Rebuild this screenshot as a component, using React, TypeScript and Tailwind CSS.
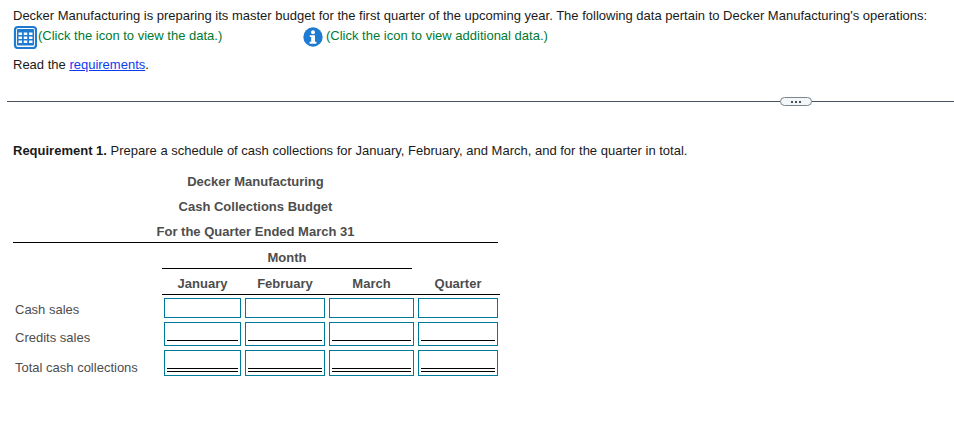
const font = { fontFamily: '"Liberation Sans", Arial, sans-serif' };

function CellBox({ lines, h, pb }: { lines: number; h: string; pb: string }) {
  return (
    <div className="px-[2px] flex items-start">
      <div className={`w-full ${h} ${pb} border border-[#007c98] bg-white px-[2px] flex flex-col justify-end`}>
        {lines >= 1 && <div className="h-px bg-black" />}
        {lines === 2 && <div className="h-px bg-black mt-[2px]" />}
      </div>
    </div>
  );
}

function Row({ label, lines, h, pb, cls, labelCls }: { label: string; lines: number; h: string; pb: string; cls: string; labelCls: string }) {
  return (
    <div className={`grid grid-cols-[149px_81px_84px_89px_84px] ${cls}`}>
      <div className={`pl-[2px] flex items-center text-[#4d4d4d] ${labelCls}`}>{label}</div>
      <CellBox lines={lines} h={h} pb={pb} />
      <CellBox lines={lines} h={h} pb={pb} />
      <CellBox lines={lines} h={h} pb={pb} />
      <CellBox lines={lines} h={h} pb={pb} />
    </div>
  );
}

export default function App() {
  return (
    <div className="w-[954px] h-[431px] bg-white text-[13px] leading-[15px] text-[#1a1a1a] overflow-hidden" style={font}>
      <div className="pl-[13px] pt-[8px]">
        <p>Decker Manufacturing is preparing its master budget for the first quarter of the upcoming year. The following data pertain to Decker Manufacturing's operations:</p>
        <div className="flex items-center h-[24px] mt-px">
          <svg width="24" height="24" viewBox="0 0 24 24" className="shrink-0 mt-[2px]">
            <rect x="2" y="2" width="21" height="21" rx="3" fill="#fff" stroke="#1f7ad1" strokeWidth="2.2" />
            <rect x="4" y="4" width="17" height="16.5" rx="1" fill="#1f7ad1" />
            <g fill="#fff">
              <rect x="5.5" y="7.5" width="3.5" height="2.5" /><rect x="10.75" y="7.5" width="3.5" height="2.5" /><rect x="16" y="7.5" width="3.5" height="2.5" />
              <rect x="5.5" y="11.5" width="3.5" height="2.5" /><rect x="10.75" y="11.5" width="3.5" height="2.5" /><rect x="16" y="11.5" width="3.5" height="2.5" />
              <rect x="5.5" y="15.5" width="3.5" height="2.5" /><rect x="10.75" y="15.5" width="3.5" height="2.5" /><rect x="16" y="15.5" width="3.5" height="2.5" />
            </g>
          </svg>
          <span className="text-[#007a33] w-[265px] shrink-0 ml-px -mt-px">(Click the icon to view the data.)</span>
          <svg width="20" height="20" viewBox="0 0 20 20" className="shrink-0 mr-[3px] mt-[2px]">
            <circle cx="10" cy="10" r="9.7" fill="#1f7ad1" />
            <circle cx="10" cy="5.2" r="2" fill="#fff" />
            <path d="M6.8 8.2h5.2v6.6h1.4v1.9H6.6v-1.9h1.6v-4.7H6.8z" fill="#fff" />
          </svg>
          <span className="text-[#007a33] -mt-px">(Click the icon to view additional data.)</span>
        </div>
        <p className="mt-[9px]">
          Read the <a className="text-[#0d3cf0] underline">requirements</a>.
        </p>
      </div>

      <div className="relative mt-[29px] ml-[7px] h-px bg-[#47525c]">
        <div className="absolute left-[773px] -top-[4px] w-[32px] h-[9px] rounded-full border border-[#7a8791] bg-[#f3f5f7] flex items-center justify-center gap-[2px]">
          <span className="w-[2px] h-[2px] bg-[#47525c]" />
          <span className="w-[2px] h-[2px] bg-[#47525c]" />
          <span className="w-[2px] h-[2px] bg-[#47525c]" />
        </div>
      </div>

      <div className="pl-[13px] pt-[41px]">
        <p><b className="font-bold">Requirement 1.</b> Prepare a schedule of cash collections for January, February, and March, and for the quarter in total.</p>

        <div className="w-[487px] mt-[11px] text-[#4d4d4d]">
          <div className="w-[485px] border-b border-black font-bold text-center">
            <div className="h-[25px] flex items-center justify-center">Decker Manufacturing</div>
            <div className="h-[25px] flex items-center justify-center">Cash Collections Budget</div>
            <div className="h-[23px] pt-[5px]">For the Quarter Ended March 31</div>
          </div>
          <div className="grid grid-cols-[149px_254px] font-bold">
            <div />
            <div className="h-[26px] mr-[4px] border-b border-black flex items-center justify-center pt-[3px]">Month</div>
          </div>
          <div className="grid grid-cols-[149px_81px_84px_89px_84px] font-bold">
            <div />
            <div className="col-span-4 grid grid-cols-[81px_84px_89px_84px] h-[26px] border-b border-black text-center items-center pt-[3px]">
              <span>January</span>
              <span>February</span>
              <span>March</span>
              <span>Quarter</span>
            </div>
          </div>
          <Row label="Cash sales" lines={0} h="h-[20px]" pb="pb-0" cls="mt-[3px]" labelCls="pt-[2px]" />
          <Row label="Credits sales" lines={1} h="h-[24px]" pb="pb-[4px]" cls="mt-[4px]" labelCls="pt-[6px]" />
          <Row label="Total cash collections" lines={2} h="h-[26px]" pb="pb-[3px]" cls="mt-[4px]" labelCls="pt-[8px]" />
        </div>
      </div>
    </div>
  );
}
